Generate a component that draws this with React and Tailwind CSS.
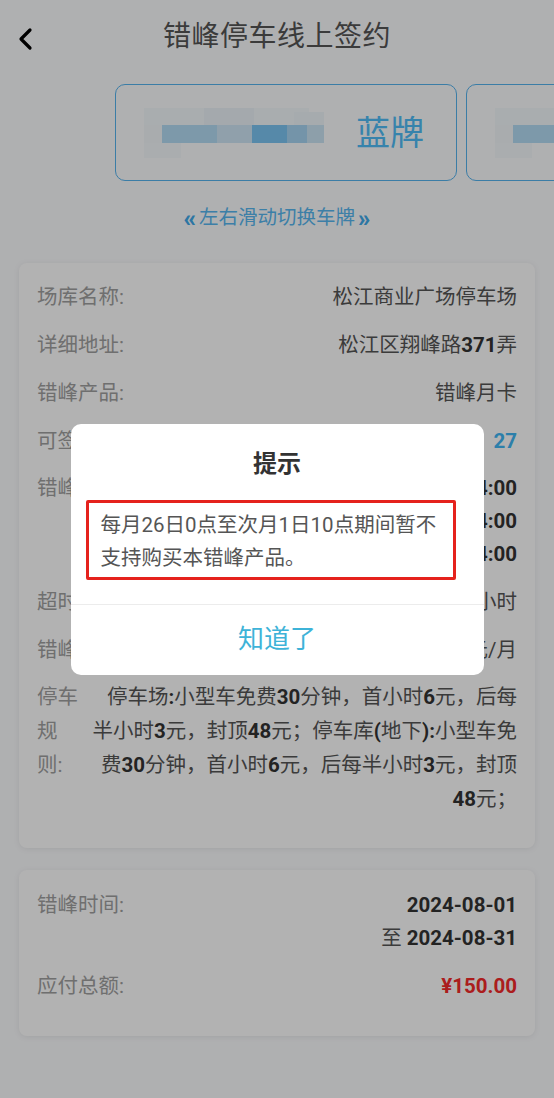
import React from 'react';

const font = { fontFamily: '"Roboto", "Noto Sans CJK SC", sans-serif' };

const Mosaic = () => (
  <svg width="180" height="50" viewBox="0 0 180 50" className="shrink-0">
    <rect x="0" y="0" width="165" height="17" fill="#f2f8fb" />
    <rect x="60" y="0" width="50" height="17" fill="#ebf3f8" />
    <rect x="150" y="4" width="30" height="13" fill="#eef5f9" />
    <rect x="0" y="17" width="18" height="18" fill="#f2f7fa" />
    <rect x="18" y="17" width="55" height="18" fill="#b4dbf4" />
    <rect x="73" y="17" width="35" height="18" fill="#cfe6f5" />
    <rect x="108" y="17" width="35" height="18" fill="#7cc4f3" />
    <rect x="143" y="17" width="20" height="18" fill="#a6d4f2" />
    <rect x="163" y="17" width="17" height="18" fill="#cbe4f4" />
    <rect x="0" y="35" width="37" height="15" fill="#f4f8fb" />
  </svg>
);

const PlateCard = () => (
  <div className="w-[342px] h-[97px] shrink-0 rounded-[10px] border-[1.5px] border-[#55b3ee] flex items-center pl-[28px]">
    <Mosaic />
    <span className="ml-[32px] text-[34px] leading-none text-[#4fbcf6]">蓝牌</span>
  </div>
);

const Row = ({ label, children }) => (
  <div className="h-[48px] flex items-center justify-between">
    <span className="text-[#a0a0a0]">{label}</span>
    <span className="text-[#555]">{children}</span>
  </div>
);

const B = ({ children }) => <b className="font-bold text-[#333]">{children}</b>;

export default function App() {
  return (
    <div style={font} className="relative h-[1098px] overflow-hidden bg-[#fbfcfe] text-[20.5px]">
      <div className="h-[74px] relative flex items-center justify-center">
        <svg className="absolute left-[17px] top-[27px]" width="18" height="24" viewBox="0 0 18 24">
          <polyline points="13,3 4,12 13,21" fill="none" stroke="#000" strokeWidth="3.2" strokeLinecap="round" strokeLinejoin="round" />
        </svg>
        <span className="text-[28px] text-[#555] tracking-[0.5px]">错峰停车线上签约</span>
      </div>

      <div className="pt-[10px]">
        <div className="flex gap-[9px] pl-[115px] overflow-hidden">
          <PlateCard />
          <PlateCard />
        </div>
        <div className="mt-[23px] pb-[31px] flex items-center justify-center gap-[3px] text-[19.5px] leading-[28px] text-[#56b6f0]">
          <b className="font-black text-[24px] text-[#3fa9ea]">«</b>
          <span>左右滑动切换车牌</span>
          <b className="font-black text-[24px] text-[#3fa9ea]">»</b>
        </div>
      </div>

      <div className="mx-[19px] rounded-[8px] bg-white shadow-[0_1px_6px_rgba(0,0,0,0.08)] px-[18px] pt-[10px] pb-[32px]">
        <Row label="场库名称:">松江商业广场停车场</Row>
        <Row label="详细地址:">松江区翔峰路<B>371</B>弄</Row>
        <Row label="错峰产品:">错峰月卡</Row>
        <Row label="可签约数量:"><b className="font-bold text-[#3fb6f4]">27</b></Row>
        <div className="flex justify-between py-[7px] leading-[33px]">
          <span className="text-[#a0a0a0]">错峰时段:</span>
          <span className="text-right text-[#555]">
            工作日 <B>19:00-24:00</B><br />
            周六 <B>00:00-24:00</B><br />
            周日 <B>00:00-24:00</B>
          </span>
        </div>
        <Row label="超时收费:"><B>6</B>元/小时</Row>
        <Row label="错峰价格:"><B>150</B>元/月</Row>
        <div className="flex justify-between pt-[6px] leading-[34px]">
          <span className="w-[44px] shrink-0 text-[#a0a0a0]">停车规则:</span>
          <span className="flex-1 text-right text-[#555]">
            停车场<B>:</B>小型车免费<B>30</B>分钟，首小时<B>6</B>元，后每<br />
            半小时<B>3</B>元，封顶<B>48</B>元；停车库<B>(</B>地下<B>):</B>小型车免<br />
            费<B>30</B>分钟，首小时<B>6</B>元，后每半小时<B>3</B>元，封顶<br />
            <B>48</B>元；
          </span>
        </div>
      </div>

      <div className="mt-[22px] mx-[19px] rounded-[8px] bg-white shadow-[0_1px_6px_rgba(0,0,0,0.08)] px-[18px] pt-[12px] pb-[26px]">
        <div className="flex justify-between py-[7px] leading-[33px]">
          <span className="text-[#a0a0a0]">错峰时间:</span>
          <span className="text-right text-[#555]">
            <B>2024-08-01</B><br />
            至 <B>2024-08-31</B>
          </span>
        </div>
        <div className="h-[48px] flex items-center justify-between">
          <span className="text-[#a0a0a0]">应付总额:</span>
          <b className="font-bold text-[#f52a2a]">¥150.00</b>
        </div>
      </div>

      <div className="absolute inset-0 bg-black/30 flex items-center justify-center">
        <div className="w-[413px] bg-white rounded-[10px] overflow-hidden">
          <div className="pt-[26px] text-center text-[24px] leading-[28px] font-bold text-[#333]">提示</div>
          <div className="mt-[22px] ml-[15px] mr-[28px] border-[3px] border-[#e5221d] rounded-[2px] pl-[12px] pt-[6px] pb-[2px] leading-[33px] text-[20.5px] text-[#555] whitespace-nowrap">
            每月26日0点至次月1日10点期间暂不<br />
            支持购买本错峰产品。
          </div>
          <div className="mt-[24px] border-t border-[#ececec] h-[71px] flex items-center justify-center text-[26px] text-[#3eb3d8]">
            知道了
          </div>
        </div>
      </div>
    </div>
  );
}
